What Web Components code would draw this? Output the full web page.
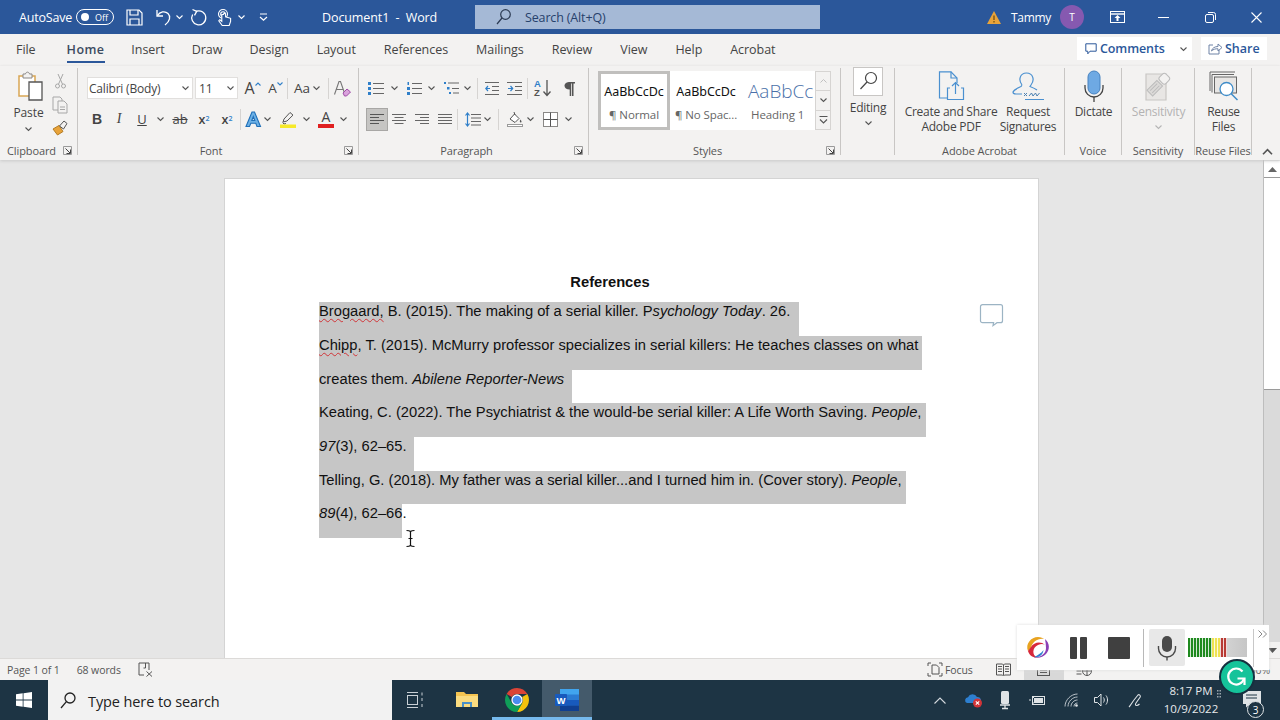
<!DOCTYPE html>
<html>
<head>
<meta charset="utf-8">
<title>Document1 - Word</title>
<style>
	html, body { margin: 0; height: 100%; overflow: hidden; background: #e6e6e6; }
</style>
</head>
<body>
<word-app>
	<word-titlebar></word-titlebar>
	<word-tabs>
		<tab-item>File</tab-item>
		<tab-item active style="margin-left:3px;letter-spacing:.4px">Home</tab-item>
		<tab-item style="margin-left:-1px">Insert</tab-item>
		<tab-item style="margin-left:-1px">Draw</tab-item>
		<tab-item style="margin-left:-1px">Design</tab-item>
		<tab-item>Layout</tab-item>
		<tab-item>References</tab-item>
		<tab-item>Mailings</tab-item>
		<tab-item>Review</tab-item>
		<tab-item>View</tab-item>
		<tab-item>Help</tab-item>
		<tab-item>Acrobat</tab-item>
	</word-tabs>
	<word-ribbon>
		<ribbon-group launcher style="width:78px" label="Clipboard">
			<clipboard-tools></clipboard-tools>
		</ribbon-group>
		<ribbon-group launcher style="width:281px" label="Font">
			<font-tools></font-tools>
		</ribbon-group>
		<ribbon-group launcher style="width:230px" label="Paragraph">
			<paragraph-tools></paragraph-tools>
		</ribbon-group>
		<ribbon-group launcher style="width:252px" label="Styles">
			<style-gallery>
				<style-card selected sample="AaBbCcDc">¶ Normal</style-card>
				<style-card sample="AaBbCcDc">¶ No Spac...</style-card>
				<style-card heading sample="AaBbCc">Heading 1</style-card>
			</style-gallery>
		</ribbon-group>
		<ribbon-group style="width:54px" label="">
			<big-btn icon="editing" text="Editing" chevron style="width:54px;margin-top:-4px"></big-btn>
		</ribbon-group>
		<ribbon-group style="width:170px" label="Adobe Acrobat">
			<big-btn icon="createpdf" text="Create and Share|Adobe PDF" style="width:112px"></big-btn>
			<big-btn icon="signature" text="Request|Signatures" style="width:58px;margin-left:-8px"></big-btn>
		</ribbon-group>
		<ribbon-group style="width:57px" label="Voice">
			<big-btn icon="dictate" text="Dictate" style="width:57px"></big-btn>
		</ribbon-group>
		<ribbon-group style="width:73px" label="Sensitivity">
			<big-btn icon="sensitivity" text="Sensitivity" chevron muted style="width:73px"></big-btn>
		</ribbon-group>
		<ribbon-group style="width:57px" label="Reuse Files">
			<big-btn icon="reuse" text="Reuse|Files" style="width:57px"></big-btn>
		</ribbon-group>
	</word-ribbon>
	<doc-view>
		<doc-title>References</doc-title>
		<ref-line w="480"><spell-err>Brogaard,</spell-err> B. (2015). The making of a serial killer. P<i>sychology Today</i>. 26.</ref-line>
		<ref-line w="603"><spell-err>Chipp</spell-err>, T. (2015). McMurry professor specializes in serial killers: He teaches classes on what</ref-line>
		<ref-line w="253">creates them. <i>Abilene Reporter-News</i></ref-line>
		<ref-line w="607">Keating, C. (2022). The Psychiatrist &amp; the would-be serial killer: A Life Worth Saving. <i>People</i>,</ref-line>
		<ref-line w="95"><i>97</i>(3), 62–65.</ref-line>
		<ref-line w="587">Telling, G. (2018). My father was a serial killer...and I turned him in. (Cover story). <i>People</i>,</ref-line>
		<ref-line w="83"><i>89</i>(4), 62–66.</ref-line>
	</doc-view>
	<status-bar></status-bar>
	<win-taskbar></win-taskbar>
	<rec-toolbar></rec-toolbar>
	<grammarly-badge></grammarly-badge>
	<text-cursor></text-cursor>
</word-app>

<script>
const B = '#2f7fc9';
const chev = (c) => `<path d="M.5 .5L3.5 3.5L6.5 .5" fill="none" stroke="${c}" stroke-width="1.1"/>`;

// name: [width, height, inner svg]
const ICONS = {
	chev: [7, 4, chev('#555')],
	chevw: [7, 4, chev('#fff')],
	chevg: [7, 4, chev('#b5b5b5')],
	save: [17, 17, `<g fill="none" stroke="#fff" stroke-width="1.2"><path d="M1 1h12l3 3v12H1z"/><path d="M4 1v5h8V1M4 16v-6h9v6"/></g>`],
	undo: [16, 17, `<g fill="none" stroke="#fff" stroke-width="1.3"><path d="M2 1v6h6"/><path d="M2.4 6.6C5 2.5 10 1.6 13 4.5c2.8 2.8 2.2 7.5-3 11.5"/></g>`],
	redo: [17, 17, `<g fill="none" stroke="#fff" stroke-width="1.3"><path d="M6.5 2.2A7 7 0 1 1 2.6 5.5"/><path d="M2.5 .5L6.7 2.3L4.5 6.4"/></g>`],
	touch: [15, 17, `<g fill="none" stroke="#fff" stroke-width="1.1"><circle cx="6" cy="5" r="4.5"/><circle cx="6" cy="5" r="2.3"/><path d="M4.8 5.5v6.8l-2-1.6-1 1 3.4 4.8h7l1.4-4v-3.2l-5-1.4V5.5a1 1 0 0 0-2.2 0z" fill="#2b579a"/></g>`],
	qat: [9, 8, `<path d="M1 1h7" stroke="#fff" fill="none"/><path d="M1 4L4.500 7.200L8 4" stroke="#fff" fill="none" stroke-width="1.2"/>`],
	mag: [15, 16, `<g fill="none" stroke="#2b3a52" stroke-width="1.2"><circle cx="9.500" cy="5.500" r="4.800"/><path d="M6 9L1 15"/></g>`],
	warn: [14, 13, `<path d="M7 0L14 13H0z" fill="#e8a33a"/><path d="M7 4.500v4.500M7 10v1.500" stroke="#6a4a10" stroke-width="1.2"/>`],
	display: [15, 12, `<g fill="none" stroke="#fff"><rect x=".5" y=".5" width="14" height="11"/><path d="M.5 3h14" stroke-width="1.400"/></g><path d="M7.500 4l3 3H8.500v3h-2V7H4.500z" fill="#fff"/>`],
	min: [11, 1, `<path d="M0 .5h11" stroke="#fff"/>`],
	restore: [11, 11, `<g fill="none" stroke="#fff"><rect x=".5" y="2.500" width="8" height="8" rx="1.500"/><path d="M3 .5h5.500a2 2 0 0 1 2 2V8"/></g>`],
	close: [11, 11, `<path d="M.5 .5l10 10M10.500 .5l-10 10" stroke="#fff" stroke-width="1.100"/>`],
	comment: [12, 12, `<path d="M.8 .8h10.400v7.400H5L2.800 10.800V8.200H.8z" fill="none" stroke="#2b579a"/>`],
	share: [15, 13, `<g fill="none" stroke="#6f83a6"><path d="M5 3H1v9h10V8"/><path d="M3.500 9C4 6 7 4.500 10 4.500V2l4 3.500L10 9V6.800C7.500 6.500 5 7.500 3.500 9z"/></g>`],
	launcher: [9, 9, `<g fill="none" stroke="#777"><path d="M.5 8.500V.5h8v8z" stroke="#9a9a9a"/><path d="M2.500 2.500l4.500 4.500M7.500 3.500v4h-4" stroke="#444"/></g>`],
	paste: [29, 31, `<path d="M4 5h16v20H4z" fill="#fff" stroke="#d9a654" stroke-width="1.500"/><path d="M8 5V3h2.500c.5-2.500 3.500-2.500 4 0H17v4H8z" fill="#f3f2f1" stroke="#8a8886"/><path d="M14 11h13v18H14z" fill="#fff" stroke="#555" stroke-width="1.300"/>`],
	cut: [11, 16, `<g fill="none" stroke="#a7a7a7"><circle cx="2.500" cy="13" r="2"/><circle cx="8.500" cy="13" r="2"/><path d="M3.500 11.200L8 1M7.500 11.200L3 1"/></g>`],
	copy: [16, 18, `<g fill="#f3f2f1" stroke="#a7a7a7"><path d="M1 1h7l2 2v11H1z"/><path d="M6 5h6l3 3v9H6z"/><path d="M8 11h5M8 13.500h5"/></g>`],
	painter: [16, 16, `<path d="M1 9l6-3.500 4 6L5.500 15z" fill="#e8a33a" stroke="#b57c22"/><path d="M7.500 6L12 1l3 2.500-3.500 5.500z" fill="#f3f2f1" stroke="#555"/>`],
	grow: [6, 4, `<path d="M.5 3.500L3 1l2.500 2.500" fill="none" stroke="${B}" stroke-width="1.100"/>`],
	shrink: [6, 4, `<path d="M.5 .5L3 3l2.500-2.500" fill="none" stroke="${B}" stroke-width="1.100"/>`],
	clearfmt: [17, 17, `<path d="M.5 14.500L5 1.500h1.500L11 14.500M2.500 9.500h6.500" fill="none" stroke="#777" stroke-width="1.100"/><path d="M9 13l4-4 3.500 3-4 4H10.500z" fill="#d9a3dc" stroke="#a04ca8"/>`],
	texteff: [16, 16, `<path d="M1 15.500L7 1h2.500l6 14.500h-3.500l-1.200-3.300H5.800L4.500 15.500zM6.800 9.500h3L8.300 5.500z" fill="#6cb1e6" stroke="#1f6fb8" stroke-width="1.100"/>`],
	marker: [16, 17, `<path d="M3 11l1-3 6-6.500 3 2.600L7 10z" fill="none" stroke="#555"/><path d="M2.500 11.500l1.500 1.500 2-.5" stroke="#555" fill="none"/><rect x="0" y="13.500" width="16" height="3.500" fill="#f6e929"/>`],
	bullets: [16, 15, `<g fill="${B}"><rect x="0" y="1" width="3" height="3"/><rect x="0" y="6" width="3" height="3"/><rect x="0" y="11" width="3" height="3"/></g><g stroke="#666"><path d="M5 2.500h11M5 7.500h11M5 12.500h11"/></g>`],
	numbers: [16, 15, `<g fill="${B}"><rect x="1.500" y="1" width="1.500" height="3"/><rect x="1" y="6" width="3" height="3"/><rect x="1" y="11" width="3" height="3"/></g><g stroke="#666"><path d="M6 2.500h10M6 7.500h10M6 12.500h10"/></g>`],
	multi: [16, 15, `<g fill="${B}"><rect x="1" y="1" width="2" height="2"/><rect x="4" y="6" width="2.500" height="2.500"/><rect x="6" y="11" width="2" height="2"/></g><g stroke="#666"><path d="M5 2h11M9 7.500h7M10 12h6"/></g>`],
	outdent: [14, 13, `<g stroke="#666"><path d="M0 .5h14M7 4.500h7M7 8.500h7M0 12.500h14"/></g><path d="M5 6.500H1M3 4L.8 6.500 3 9" stroke="${B}" fill="none" stroke-width="1.200"/>`],
	indent: [15, 13, `<g stroke="#666"><path d="M0 .5h15M8 4.500h7M8 8.500h7M0 12.500h15"/></g><path d="M1 6.500h4M3.500 4L5.700 6.500 3.500 9" stroke="${B}" fill="none" stroke-width="1.200"/>`],
	sort: [18, 18, `<text x="0" y="8" font-size="9.500" font-weight="600" fill="${B}" font-family="Liberation Sans">A</text><text x="0" y="17" font-size="9.500" font-weight="600" fill="#555" font-family="Liberation Sans">Z</text><path d="M13 1v15M9.500 12.500L13 16.500l3.500-4" fill="none" stroke="#555" stroke-width="1.300"/>`],
	pilcrow: [11, 15, `<path d="M6 1h5v1.500H9.500V15H8V2.500H7.200V15H5.700V8.500C2.500 8.500 .5 7 .5 4.700S2.800 1 6 1z" fill="#555"/>`],
	al: [14, 11, `<g stroke="#555"><path d="M0 .5h14M0 3.500h9M0 6.500h14M0 9.500h9"/></g>`],
	ac: [14, 11, `<g stroke="#666"><path d="M0 .5h14M2.500 3.500h9M0 6.500h14M2.500 9.500h9"/></g>`],
	ar: [14, 11, `<g stroke="#666"><path d="M0 .5h14M5 3.500h9M0 6.500h14M5 9.500h9"/></g>`],
	aj: [14, 11, `<g stroke="#666"><path d="M0 .5h14M0 3.500h14M0 6.500h14M0 9.500h14"/></g>`],
	spacing: [16, 15, `<g stroke="#666"><path d="M6 2.500h10M6 6h10M6 9.500h10M6 13h10"/></g><path d="M2.500 1v13M.5 3.500l2-2.500 2 2.500M.5 11.500l2 2.500 2-2.500" fill="none" stroke="${B}" stroke-width="1.200"/>`],
	shade: [16, 16, `<path d="M3 8l4.500-5 4.500 4.500-4 4z" fill="#fff" stroke="#555"/><path d="M13.500 8.500c1 1.500 1.500 2.500.5 3s-1.800-1-.5-3z" fill="#555"/><path d="M7 1l1 3" stroke="#555"/><rect x=".5" y="13.500" width="15" height="2" fill="#fff" stroke="#9a9a9a"/>`],
	borders: [15, 15, `<g fill="#fff" stroke="#8a8886"><rect x=".5" y=".5" width="14" height="14"/></g><path d="M7.500 .5v14M.5 7.500h14" stroke="#555"/>`],
	up: [7, 4, `<path d="M.5 3.500L3.500 .5l3 3" fill="none" stroke="#c0c0c0"/>`],
	more: [9, 8, `<path d="M.5 .5h8" stroke="#555"/><path d="M1 3.500L4.500 7 8 3.500" fill="none" stroke="#555" stroke-width="1.100"/>`],
	editing: [30, 30, `<rect x=".5" y=".5" width="29" height="28" fill="#fff" stroke="#c8c6c4"/><g fill="none" stroke="#444" stroke-width="1.200"><circle cx="18" cy="11" r="5.500"/><path d="M14 15l-6.500 7"/></g>`],
	createpdf: [27, 30, `<g fill="none" stroke="#4a90d0" stroke-width="1.200"><path d="M9 27H1.500V.8H13l6 6.200v5"/><path d="M13 .8v6.200h6"/><path d="M12 17h-2.500v11.500h16V17H23"/><path d="M17.500 23V11.500M14 15l3.500-3.500L21 15"/></g>`],
	signature: [32, 28, `<g fill="none" stroke="#4a90d0" stroke-width="1.200"><path d="M10 13C6 8 8 1 14.500 1S23 8 19 13l-1 1.500c2 .8 5 2 7 3.500M10 13l-1 1.500C6 16 2 17.500 1 20c0 1.500 1 2 3 2h6"/></g><path d="M12 21l3 3m0-3l-3 3" stroke="#4a7fb0"/><path d="M17 24l2.500-3 1.500 3 2.500-3 1.500 3 2.500-3" fill="none" stroke="#4a7fb0"/><path d="M13 27.500h19" stroke="#4a90d0"/>`],
	dictate: [20, 31, `<rect x="4" y="0" width="12" height="23" rx="6" fill="#6ea9e3" stroke="#4682c0"/><path d="M1 14v3a9 9 0 0 0 18 0v-3" fill="none" stroke="#444" stroke-width="1.300"/><path d="M10 26v5" stroke="#444" stroke-width="1.300"/>`],
	sensitivity: [28, 30, `<path d="M1 3h20v26H1z" fill="#e8e6e4" stroke="#c8c6c4" stroke-width="1.200"/><g transform="rotate(-45 14 13)" fill="#dcdad8" stroke="#bcbcbc"><rect x="1" y="9" width="14" height="8"/><path d="M3 11.500h10M3 14.500h10"/><rect x="17" y="8.500" width="9" height="9" rx="2.500" fill="#f3f2f1"/></g>`],
	reuse: [30, 30, `<g fill="none" stroke="#666"><path d="M1 1h25M1 1v19"/><path d="M3 3.500h22M3 3.500v18" /></g><rect x="5.500" y="6" width="22" height="16" fill="#e8e6e4" stroke="#666"/><circle cx="17.500" cy="18" r="6.500" fill="#fff" stroke="#3f8cc8" stroke-width="1.300"/><path d="M22 22.500l6.500 6.500" stroke="#3f8cc8" stroke-width="1.500"/>`],
	bubble: [23, 23, `<path d="M2.500 .7h18a2 2 0 0 1 2 2v14a2 2 0 0 1-2 2h-3.500l-4 3 .6-3H2.500a2 2 0 0 1-2-2v-14a2 2 0 0 1 2-2z" fill="#fff" stroke="#9cb4c4" stroke-width="1.200"/>`],
	proof: [15, 15, `<g fill="none" stroke="#555"><path d="M6 13H1V1h10v7"/><path d="M7.500 1v5h-2"/><path d="M8.500 9.500l5.500 5m0-5l-5.500 5"/></g>`],
	focus: [16, 15, `<g fill="none" stroke="#555"><path d="M1 4V1h3M12 1h3v3M15 11v3h-3M4 14H1v-3"/><path d="M5 3h4.500L12 5.500V12H5z"/></g>`],
	read: [15, 13, `<g fill="none" stroke="#555"><path d="M.5 1h6l1 1 1-1h6v11h-6l-1 1-1-1h-6z"/><path d="M7.500 2v10M2 3.500h4M2 6h4M2 8.500h4M9 3.500h4M9 6h4M9 8.500h4"/></g>`],
	print: [13, 12, `<g fill="none" stroke="#555"><rect x=".5" y=".5" width="12" height="11"/><path d="M3 3.500h7M3 6h7M3 8.500h7"/></g>`],
	web: [16, 12, `<g fill="none" stroke="#555"><path d="M.5 1h8M.5 4h6M.5 7h5M.5 10h5"/><circle cx="11" cy="7" r="4.500"/><path d="M6.500 7h9M11 2.500v9"/></g>`],
	win: [16, 16, `<path d="M0 2.300L6.700 1.300v6.300H0zM7.500 1.200L16 0v7.600H7.500zM0 8.400h6.700v6.400L0 13.800zM7.500 8.400H16V16l-8.500-1.200z" fill="#fff"/>`],
	magdark: [16, 17, `<g fill="none" stroke="#222" stroke-width="1.300"><circle cx="10" cy="6" r="5"/><path d="M6.400 9.600L1 16"/></g>`],
	taskview: [16, 16, `<g fill="none" stroke="#c9d0d6"><rect x=".5" y="3.500" width="10" height="9"/><path d="M0 .5h11M0 15.500h11M15 .5v3M15 6v3M15 12v3"/></g>`],
	folder: [22, 18, `<path d="M0 1h8l2 2h12v13H0z" fill="#f5c451"/><path d="M0 5h22v11H0z" fill="#fbdc80"/><path d="M6 16v-5h10v5h-2v-3H8v3z" fill="#4a90c8"/>`],
	chrome: [24, 24, `<path d="M12 0a12 12 0 0 1 10.390 6H12a6 6 0 0 0-5.200 3L1.610 6A12 12 0 0 1 12 0z" fill="#db4437"/><path d="M22.390 6A12 12 0 0 1 12 24l5.200-9A6 6 0 0 0 17.200 9z" fill="#f4c20d"/><path d="M1.610 6l5.200 9A6 6 0 0 0 12 18l5.200-3L12 24A12 12 0 0 1 1.610 6z" fill="#0f9d58"/><circle cx="12" cy="12" r="5" fill="#4a8cf0" stroke="#fff" stroke-width="1.300"/>`],
	word: [24, 22, `<rect x="5" y="0" width="19" height="22" rx="1.500" fill="#2b7cd3"/><rect x="5" y="0" width="19" height="5.500" fill="#41a5ee"/><rect x="5" y="11" width="19" height="5.500" fill="#185abd"/><rect x="5" y="16.500" width="19" height="5.500" fill="#103f91"/><rect x="0" y="5" width="12" height="12" rx="1" fill="#185abd"/><text x="6" y="14.500" font-size="9.500" font-weight="700" fill="#fff" text-anchor="middle" font-family="Liberation Sans">W</text>`],
	trayup: [12, 7, `<path d="M.5 6.500L6 1l5.500 5.500" fill="none" stroke="#d5dade" stroke-width="1.100"/>`],
	onedrive: [18, 16, `<path d="M2 11a3 3 0 0 1 1-5.800A5 5 0 0 1 12 5a3.500 3.500 0 0 1 3 6z" fill="#2d7fd0"/><circle cx="12.500" cy="11" r="4.500" fill="#d13438"/><path d="M10.800 9.300l3.400 3.400m0-3.400l-3.400 3.400" stroke="#fff" stroke-width="1.100"/>`],
	traymic: [10, 18, `<rect x="1" y="0" width="8" height="13" rx="1.500" fill="#dfe3e6"/><path d="M0 14h10M5 14v4M2 17.500h6" stroke="#dfe3e6" stroke-width="1.300"/>`],
	battery: [16, 11, `<path d="M3 2.500h2M3 8h2M0 5h2" stroke="#dfe3e6"/><rect x="3.500" y="1.500" width="12" height="8" fill="none" stroke="#dfe3e6"/><rect x="5" y="3" width="9" height="5" fill="#dfe3e6"/>`],
	wifi: [14, 14, `<g fill="none" stroke="#b9c1c8"><path d="M1 13.500C1 7 7 1 13.500 1"/><path d="M4 13.500C4 8.500 8.500 4 13.500 4"/><path d="M7 13.500C7 10 10 7 13.500 7"/><path d="M10 13.500c0-2 1.500-3.500 3.500-3.500"/></g><circle cx="12.500" cy="12.500" r="1.300" fill="#dfe3e6"/>`],
	volume: [15, 14, `<g fill="none" stroke="#dfe3e6"><path d="M.5 4.500h3L7 1v12L3.500 9.500h-3z"/><path d="M9.500 4.500c1 1.500 1 3.500 0 5M12 2.500c2 2.500 2 6.500 0 9"/></g>`],
	pen: [14, 15, `<path d="M1 14c2-2 2.500-4 5-7l4-5c1-1 3 .5 2.200 2L8 10c-1 1.500-.5 2.500.5 2.500s2-.5 3-1.500" fill="none" stroke="#dfe3e6" stroke-width="1.100"/>`],
	notify: [21, 21, `<path d="M0 1h18v13H7l-4 3.500V14H0z" fill="#dfe3e6"/><path d="M3 5h11M3 8h11" stroke="#1d3444"/>`],
	grip: [4, 7, `<path d="M0 0h1.500v1.500H0zM2.500 0H4v1.500H2.500zM0 3h1.500v1.500H0zM2.500 3H4v1.500H2.500zM0 6h1.500v1.500H0zM2.500 6H4v1.500H2.500z" fill="#9aa5ad"/>`],
	recmic: [20, 26, `<rect x="5" y="1" width="10" height="16" rx="5" fill="#4a4a4a"/><path d="M1.500 11v2.500a8.500 8.500 0 0 0 17 0V11" fill="none" stroke="#4a4a4a" stroke-width="1.400"/><path d="M10 22v3.500" stroke="#4a4a4a" stroke-width="1.400"/>`],
	reclogo: [25, 23, `<path d="M3 15C0 8 6 1 13 1c3 0 5 1 6 2-6-1-12 3-13 9z" fill="#e8a320"/><path d="M20 3c5 4 5 11 1 15-3 3-8 5-12 3 6 1 12-3 12-9 0-3-.5-6-1-9z" fill="#8b3fb5"/><path d="M3 15c1 4 5 7 9 6.500C7 19 7 12 13 9c3-1.500 5-1.500 7 0-4-4-11-3-14 2z" fill="#d7283b"/><path d="M9 21c5 1 9-2 9.500-7-2 3-6 5.500-9.500 7z" fill="#2f80d0"/>`],
	dbl: [9, 8, `<path d="M.5 .5L4 4 .5 7.500M5 .5L8.500 4 5 7.500" fill="none" stroke="#8a8a8a"/>`],
	gram: [22, 22, `<path d="M18 12.500A8 8 0 1 1 16.500 5.500" fill="none" stroke="#fff" stroke-width="2.200"/><path d="M11.500 12.500h7V19M18.500 12.500L12 12.500" fill="none" stroke="#fff" stroke-width="2.200"/>`],
	ibeam: [9, 17, `<path d="M.5 .5c2 0 3.200.3 4 1 .8-.7 2-1 4-1M4.500 1.500v14M.5 16.500c2 0 3.200-.3 4-1 .8.700 2 1 4 1M2.500 8.500h4" fill="none" stroke="#111" stroke-width="1.200"/>`],
	sbup: [9, 5, `<path d="M0 5L4.500 0 9 5z" fill="#666"/>`],
	sbdown: [9, 5, `<path d="M0 0L4.500 5 9 0z" fill="#555"/>`],
};

class WIc extends HTMLElement {
	connectedCallback() {
		if (this.shadowRoot) return;
		const [w, h, inner] = ICONS[this.getAttribute('name')];
		this.attachShadow({mode: 'open'}).innerHTML = `
			<style>:host { display: inline-flex; flex: none; line-height: 0; } svg { display: block; overflow: visible; }</style>
			<svg width="${w}" height="${h}" viewBox="0 0 ${w} ${h}">${inner}</svg>`;
		if (this.hasAttribute('ml')) this.style.marginLeft = this.getAttribute('ml') + 'px';
	}
}
customElements.define('w-ic', WIc);

class ToolBtn extends HTMLElement {
	constructor() {
		super();
		this.attachShadow({mode: 'open'}).innerHTML = `
			<style>
				:host { display: inline-flex; align-items: center; justify-content: center; height: 22px; flex: none; position: relative; color: #444; font-family: "Open Sans", sans-serif; font-size: 13px; }
				:host([rule]) { background: #d6d4d2; height: 21px; }
				:host([on]) { background: #c6c5c3; outline: 1px solid #a8a7a5; outline-offset: -1px; height: 23px; }
			</style>
			<slot></slot>`;
	}
	connectedCallback() {
		if (this.hasAttribute('w')) this.style.width = this.getAttribute('w') + 'px';
		if (this.hasAttribute('ml')) this.style.marginLeft = this.getAttribute('ml') + 'px';
	}
}
customElements.define('tool-btn', ToolBtn);

function component(tag, markup) {
	const tpl = document.createElement('template');
	tpl.innerHTML = markup;
	customElements.define(tag, class extends HTMLElement {
		constructor() {
			super();
			this.attachShadow({mode: 'open'}).append(tpl.content.cloneNode(true));
		}
	});
}

component('word-app', `
	<style>
		:host { display: flex; flex-direction: column; width: 1280px; height: 720px; position: relative; overflow: hidden; font-family: "Open Sans", "Noto Sans", sans-serif; }
	</style>
	<slot></slot>`);

component('word-titlebar', `
	<style>
		:host { display: flex; align-items: center; flex: none; height: 34px; background: #2b579a; color: #fff; font-size: 12.5px; }
		.auto { margin-left: 19px; letter-spacing: -.2px; }
		.toggle { margin-left: 4px; width: 38px; height: 16px; box-sizing: border-box; border: 1px solid #fff; border-radius: 8px; display: flex; align-items: center; font-size: 9px; }
		.toggle i { width: 8px; height: 8px; margin-left: 4px; border-radius: 50%; background: #fff; }
		.toggle span { margin-left: 6px; }
		.doc { margin-left: 54px; width: 153px; letter-spacing: -.1px; }
		.search { width: 345px; height: 24px; background: #a5b9d6; display: flex; align-items: center; color: #27416b; }
		.search span { margin-left: 14px; letter-spacing: -.15px; }
		.avatar { margin-left: 11px; width: 24px; height: 24px; border-radius: 50%; background: #8659b0; font-size: 10px; display: flex; align-items: center; justify-content: center; }
	</style>
	<span class="auto">AutoSave</span>
	<div class="toggle"><i></i><span>Off</span></div>
	<w-ic name="save" ml="12"></w-ic>
	<w-ic name="undo" ml="12"></w-ic>
	<w-ic name="chevw" ml="5"></w-ic>
	<w-ic name="redo" ml="7"></w-ic>
	<w-ic name="touch" ml="10"></w-ic>
	<w-ic name="chevw" ml="6"></w-ic>
	<w-ic name="qat" ml="14"></w-ic>
	<span class="doc">Document1&nbsp; -&nbsp; Word</span>
	<div class="search"><w-ic name="mag" ml="21"></w-ic><span>Search (Alt+Q)</span></div>
	<w-ic name="warn" ml="167"></w-ic>
	<span style="margin-left:10px;width:38px;font-size:12px;letter-spacing:-.3px">Tammy</span>
	<div class="avatar">T</div>
	<w-ic name="display" ml="26"></w-ic>
	<w-ic name="min" ml="33"></w-ic>
	<w-ic name="restore" ml="36"></w-ic>
	<w-ic name="close" ml="35"></w-ic>`);

component('word-tabs', `
	<style>
		:host { display: flex; align-items: center; flex: none; height: 32px; background: #f3f2f1; padding-left: 16px; position: relative; gap: 28px; font-size: 12.5px; color: #444; }
		.right { position: absolute; right: 13px; top: 3px; display: flex; gap: 9px; color: #2b579a; font-weight: 600; }
		.pill { height: 23px; background: #fff; display: flex; align-items: center; box-sizing: border-box; }
	</style>
	<slot></slot>
	<div class="right">
		<div class="pill" style="width:115px"><w-ic name="comment" ml="8"></w-ic><span style="margin-left:3px;letter-spacing:-.1px">Comments</span><w-ic name="chev" ml="15"></w-ic></div>
		<div class="pill" style="width:66px"><w-ic name="share" ml="7"></w-ic><span style="margin-left:2px">Share</span></div>
	</div>`);

component('tab-item', `
	<style>
		:host { display: block; position: relative; line-height: 32px; letter-spacing: -.05px; }
		:host([active]) { font-weight: 600; color: #3b4a60; }
		:host([active])::after { content: ""; position: absolute; left: 0; right: -1px; bottom: 3px; height: 2px; background: #2b579a; }
	</style>
	<slot></slot>`);

component('word-ribbon', `
	<style>
		:host { display: flex; flex: none; height: 94px; box-sizing: border-box; padding-top: 2px; background: #f3f2f1; box-shadow: 0 1px 3px #c8c8c8; position: relative; z-index: 2; font-size: 12px; color: #444; }
		.collapse { position: absolute; right: 9px; bottom: 6px; }
	</style>
	<slot></slot>
	<w-ic class="collapse" name="chev" style="transform:rotate(180deg) scale(1.500)"></w-ic>`);

class RibbonGroup extends HTMLElement {
	constructor() {
		super();
		this.attachShadow({mode: 'open'}).innerHTML = `
			<style>
				:host { display: flex; flex-direction: column; flex: none; height: 87px; box-sizing: border-box; border-right: 1px solid #c8c6c4; font-size: 11px; color: #555; }
				:host([launcher]) .foot { padding-right: 4px; }
				.body { display: flex; flex: 1; min-height: 0; }
				.foot { display: flex; align-items: center; height: 15px; margin-bottom: -3px; letter-spacing: -.1px; white-space: nowrap; }
				.foot span { flex: 1; text-align: center; }
				.foot w-ic { margin-right: 1px; }
			</style>
			<div class="body"><slot></slot></div>
			<div class="foot"><span id="l"></span></div>`;
	}
	connectedCallback() {
		const root = this.shadowRoot;
		root.getElementById('l').textContent = this.getAttribute('label');
		if (this.hasAttribute('launcher') && !root.querySelector('w-ic')) {
			const ic = document.createElement('w-ic');
			ic.setAttribute('name', 'launcher');
			root.querySelector('.foot').append(ic);
		}
	}
}
customElements.define('ribbon-group', RibbonGroup);

component('clipboard-tools', `
	<style>
		:host { display: flex; height: 70px; font-size: 12px; color: #444; }
		.paste { width: 57px; display: flex; flex-direction: column; align-items: center; padding-top: 3px; }
		.paste span { margin-top: 3px; line-height: 15px; letter-spacing: -.1px; }
		.paste w-ic:last-child { margin-top: 7px; }
		.side { display: flex; flex-direction: column; width: 20px; align-items: center; margin-left: -7px; }
		.side w-ic:nth-child(1) { margin-top: 5px; }
		.side w-ic:nth-child(2) { margin-top: 7px; }
		.side w-ic:nth-child(3) { margin-top: 6px; }
	</style>
	<div class="paste"><w-ic name="paste" style="margin-left:2px"></w-ic><span>Paste</span><w-ic name="chev"></w-ic></div>
	<div class="side"><w-ic name="cut"></w-ic><w-ic name="copy"></w-ic><w-ic name="painter"></w-ic></div>`);

component('font-tools', `
	<style>
		:host { display: flex; flex-direction: column; gap: 9px; padding: 9px 0 0 8px; }
		.row { display: flex; align-items: center; height: 22px; }
		.box { background: #fff; border: 1px solid #e1dfdd; box-sizing: border-box; height: 22px; display: flex; align-items: center; justify-content: space-between; padding: 0 3px 0 1px; font-size: 12px; color: #444; flex: none; letter-spacing: -.2px; }
		sub, sup { font-size: 7px; color: ${B}; line-height: 0; }
		.color { display: flex; flex-direction: column; align-items: center; font-size: 14px; line-height: 14px; color: #444; }
		.color i { display: block; width: 16px; height: 4px; background: #e02020; }
	</style>
	<div class="row">
		<div class="box" style="width:106px;margin-left:1px"><span>Calibri (Body)</span><w-ic name="chev"></w-ic></div>
		<div class="box" style="width:43px;margin-left:2px;padding-left:3px"><span>11</span><w-ic name="chev"></w-ic></div>
		<tool-btn w="19" ml="5" style="font-size:16px">A<w-ic name="grow" style="margin:-8px 0 0 0"></w-ic></tool-btn>
		<tool-btn w="17" ml="5" style="font-size:13.500px">A<w-ic name="shrink" style="margin:-8px 0 0 0"></w-ic></tool-btn>
		<tool-btn rule w="1" ml="3"></tool-btn>
		<tool-btn w="28" ml="5" style="font-size:13.500px">Aa<w-ic name="chev" ml="3"></w-ic></tool-btn>
		<tool-btn rule w="1" ml="7"></tool-btn>
		<tool-btn w="17" ml="5"><w-ic name="clearfmt"></w-ic></tool-btn>
	</div>
	<div class="row">
		<tool-btn w="22" style="font-weight:700;font-size:14px;font-family:'Liberation Sans'">B</tool-btn>
		<tool-btn w="22" style="font-style:italic;font-size:14px;font-family:'Liberation Serif'">I</tool-btn>
		<tool-btn w="24" style="text-decoration:underline;font-size:13px">U</tool-btn>
		<tool-btn w="12"><w-ic name="chev"></w-ic></tool-btn>
		<tool-btn w="28" style="text-decoration:line-through;font-size:13px">ab</tool-btn>
		<tool-btn w="20" style="font-weight:600;font-size:12.500px">x<sub>2</sub></tool-btn>
		<tool-btn w="26" style="font-weight:600;font-size:12.500px">x<sup>2</sup></tool-btn>
		<tool-btn rule w="1" style="margin-right:1px"></tool-btn>
		<tool-btn w="22"><w-ic name="texteff"></w-ic></tool-btn>
		<tool-btn w="6"><w-ic name="chev"></w-ic></tool-btn>
		<tool-btn w="20" ml="8"><w-ic name="marker"></w-ic></tool-btn>
		<tool-btn w="16"><w-ic name="chev"></w-ic></tool-btn>
		<tool-btn w="24"><div class="color">A<i></i></div></tool-btn>
		<tool-btn w="10"><w-ic name="chev"></w-ic></tool-btn>
	</div>`);

component('paragraph-tools', `
	<style>
		:host { display: flex; flex-direction: column; gap: 9px; padding-top: 9px; }
		.row { display: flex; align-items: center; height: 22px; }
	</style>
	<div class="row">
		<tool-btn w="16" ml="9"><w-ic name="bullets"></w-ic></tool-btn>
		<tool-btn w="20"><w-ic name="chev"></w-ic></tool-btn>
		<tool-btn w="20"><w-ic name="numbers"></w-ic></tool-btn>
		<tool-btn w="14"><w-ic name="chev"></w-ic></tool-btn>
		<tool-btn w="26"><w-ic name="multi"></w-ic></tool-btn>
		<tool-btn w="6"><w-ic name="chev"></w-ic></tool-btn>
		<tool-btn rule w="1" ml="7"></tool-btn>
		<tool-btn w="14" ml="7"><w-ic name="outdent"></w-ic></tool-btn>
		<tool-btn w="15" ml="8"><w-ic name="indent"></w-ic></tool-btn>
		<tool-btn rule w="1" ml="5"></tool-btn>
		<tool-btn w="18" ml="6"><w-ic name="sort"></w-ic></tool-btn>
		<tool-btn w="12" ml="11"><w-ic name="pilcrow"></w-ic></tool-btn>
	</div>
	<div class="row">
		<tool-btn on w="22" ml="7"><w-ic name="al"></w-ic></tool-btn>
		<tool-btn w="22"><w-ic name="ac"></w-ic></tool-btn>
		<tool-btn w="24"><w-ic name="ar"></w-ic></tool-btn>
		<tool-btn w="22"><w-ic name="aj"></w-ic></tool-btn>
		<tool-btn rule w="1" ml="1"></tool-btn>
		<tool-btn w="20" ml="5"><w-ic name="spacing"></w-ic></tool-btn>
		<tool-btn w="8"><w-ic name="chev"></w-ic></tool-btn>
		<tool-btn rule w="1" ml="7"></tool-btn>
		<tool-btn w="17" ml="7"><w-ic name="shade"></w-ic></tool-btn>
		<tool-btn w="14"><w-ic name="chev"></w-ic></tool-btn>
		<tool-btn w="16" ml="5"><w-ic name="borders"></w-ic></tool-btn>
		<tool-btn w="8" ml="6"><w-ic name="chev"></w-ic></tool-btn>
	</div>`);

component('style-gallery', `
	<style>
		:host { display: flex; height: 59px; margin: 3px 0 0 9px; }
		.cards { display: flex; width: 217px; height: 59px; background: #fff; overflow: hidden; }
		.scroll { display: flex; flex-direction: column; width: 16px; }
		.scroll div { flex: 1; display: flex; align-items: center; justify-content: center; border: 1px solid #d6d4d2; border-width: 1px 1px 0 1px; background: #f3f2f1; }
		.scroll div:last-child { border-bottom-width: 1px; }
	</style>
	<div class="cards"><slot></slot></div>
	<div class="scroll">
		<div><w-ic name="up"></w-ic></div>
		<div><w-ic name="chev"></w-ic></div>
		<div><w-ic name="more"></w-ic></div>
	</div>`);

class StyleCard extends HTMLElement {
	constructor() {
		super();
		this.attachShadow({mode: 'open'}).innerHTML = `
			<style>
				:host { display: flex; flex-direction: column; align-items: center; flex: none; width: 72px; height: 59px; box-sizing: border-box; padding-top: 10px; font-size: 11.500px; color: #666; overflow: hidden; }
				:host([selected]) { border: 3px solid #c0bfbd; padding-top: 7px; }
				:host([heading]) { padding-top: 5px; width: 73px; align-items: flex-start; padding-left: 6px; }
				.s { height: 22px; line-height: 22px; font-size: 12.500px; color: #111; white-space: nowrap; letter-spacing: -.05px; font-family: "Noto Sans", sans-serif; }
				:host([heading]) .s { font-size: 19px; color: #4a70a8; height: 30px; line-height: 30px; font-weight: 300; font-family: "Open Sans", sans-serif; }
				.l { margin-top: 4px; line-height: 16px; white-space: nowrap; letter-spacing: -.1px; }
				:host([heading]) .l { margin: 1px 0 0 3px; }
			</style>
			<div class="s" id="s"></div><div class="l"><slot></slot></div>`;
	}
	connectedCallback() {
		this.shadowRoot.getElementById('s').textContent = this.getAttribute('sample');
	}
}
customElements.define('style-card', StyleCard);

class BigBtn extends HTMLElement {
	constructor() {
		super();
		this.attachShadow({mode: 'open'}).innerHTML = `
			<style>
				:host { display: flex; flex-direction: column; align-items: center; flex: none; font-size: 12px; color: #444; text-align: center; letter-spacing: -.25px; }
				:host([muted]) { color: #b3b3b3; }
				.i { height: 36px; display: flex; align-items: center; justify-content: center; }
				.t { line-height: 15px; white-space: nowrap; }
				.c { margin-top: 6px; }
			</style>
			<div class="i" id="i"></div><div class="t" id="t"></div>`;
	}
	connectedCallback() {
		const root = this.shadowRoot;
		root.getElementById('i').innerHTML = `<w-ic name="${this.getAttribute('icon')}"></w-ic>`;
		root.getElementById('t').innerHTML = this.getAttribute('text').split('|').join('<br>');
		if (this.hasAttribute('chevron')) {
			const c = document.createElement('w-ic');
			c.className = 'c';
			c.setAttribute('name', this.hasAttribute('muted') ? 'chevg' : 'chev');
			root.append(c);
		}
	}
}
customElements.define('big-btn', BigBtn);

component('doc-view', `
	<style>
		:host { display: flex; flex: 1; min-height: 0; background: #e6e6e6; overflow: hidden; position: relative; }
		.stage { flex: 1; display: flex; justify-content: center; align-items: flex-start; padding-top: 18px; min-width: 0; }
		.page { width: 815px; height: 800px; box-sizing: border-box; flex: none; background: #fff; border: 1px solid #d4d4d4; padding: 93px 137px 0 94px; position: relative; font: 14.730px/18px "Liberation Sans", Arial, sans-serif; color: #111; }
		.note { position: absolute; left: 755px; top: 125px; }
		.bar { width: 17px; flex: none; display: flex; flex-direction: column; border-left: 1px solid #bdbdbd; box-sizing: border-box; }
		.btn { height: 16px; background: #fff; display: flex; align-items: center; justify-content: center; flex: none; }
		.thumb { height: 211px; background: #fff; border: solid #9a9a9a; border-width: 1px 0; flex: none; }
		.track { flex: 1; background: #dadada; }
		.low { background: #f3f2f1; }
	</style>
	<div class="stage">
		<div class="page"><slot></slot><w-ic class="note" name="bubble"></w-ic></div>
	</div>
	<div class="bar">
		<div class="btn" style="margin-top:1px"><w-ic name="sbup"></w-ic></div>
		<div class="thumb"></div>
		<div class="track"></div>
		<div class="btn low"><w-ic name="sbdown"></w-ic></div>
	</div>`);

component('doc-title', `
	<style>
		:host { display: block; text-align: center; font-weight: 700; line-height: 20px; margin-bottom: 10.300px; }
	</style>
	<slot></slot>`);

class RefLine extends HTMLElement {
	constructor() {
		super();
		this.attachShadow({mode: 'open'}).innerHTML = `
			<style>
				:host { display: block; height: 33.700px; box-sizing: border-box; background: #c6c6c6; white-space: nowrap; }
			</style>
			<slot></slot>`;
	}
	connectedCallback() {
		this.style.width = this.getAttribute('w') + 'px';
	}
}
customElements.define('ref-line', RefLine);

component('spell-err', `
	<style>
		:host { text-decoration: underline wavy #d13438 1px; text-underline-offset: 2px; }
	</style>
	<slot></slot>`);

component('status-bar', `
	<style>
		:host { display: flex; align-items: center; flex: none; height: 22px; background: #f3f2f1; border-top: 1px solid #dcdad8; box-sizing: border-box; font-size: 10.500px; color: #555; letter-spacing: -.1px; }
		.view { height: 21px; width: 40px; margin-left: 13px; background: #d8d8d8; display: flex; align-items: center; justify-content: center; }
	</style>
	<span style="margin-left:7px">Page 1 of 1</span>
	<span style="margin-left:17px">68 words</span>
	<w-ic name="proof" ml="17"></w-ic>
	<w-ic name="focus" style="margin-left:auto"></w-ic>
	<span style="margin-left:2px;margin-right:23px">Focus</span>
	<w-ic name="read"></w-ic>
	<div class="view"><w-ic name="print"></w-ic></div>
	<w-ic name="web" ml="12"></w-ic>
	<span style="margin-left:152px;margin-right:10px">100%</span>`);

component('win-taskbar', `
	<style>
		:host { display: flex; align-items: stretch; flex: none; height: 40px; background: #1d3444; color: #fff; font-size: 12.500px; }
		.slot { display: flex; align-items: center; justify-content: center; flex: none; position: relative; box-sizing: border-box; }
		.open::after { content: ""; position: absolute; left: 0; right: 0; bottom: 0; height: 3px; background: #76b9ed; }
		.search { width: 344px; background: #f2f2f2; color: #222; display: flex; align-items: center; font-size: 14.500px; letter-spacing: -.1px; }
		.search span { margin: 2px 0 0 12px; }
		.clock { width: 70px; flex-direction: column; line-height: 18px; font-size: 11.500px; color: #e8eaec; }
		.grip { position: absolute; right: 5px; top: 10px; }
		.badge { position: absolute; left: 21px; top: 21px; width: 15px; height: 15px; border-radius: 50%; background: #1d3444; border: 1px solid #dfe3e6; font-size: 10px; display: flex; align-items: center; justify-content: center; }
	</style>
	<div class="slot" style="width:48px"><w-ic name="win"></w-ic></div>
	<div class="search"><w-ic name="magdark" ml="12"></w-ic><span>Type here to search</span></div>
	<div class="slot" style="width:46px"><w-ic name="taskview"></w-ic></div>
	<div class="slot" style="width:4px"></div>
	<div class="slot" style="width:50px"><w-ic name="folder"></w-ic></div>
	<div class="slot open" style="width:50px"><w-ic name="chrome"></w-ic></div>
	<div class="slot open" style="width:50px;background:#445a6b"><w-ic name="word"></w-ic></div>
	<div style="flex:1"></div>
	<div class="slot" style="width:34px"><w-ic name="trayup"></w-ic></div>
	<div class="slot" style="width:33px"><w-ic name="onedrive"></w-ic></div>
	<div class="slot" style="width:30px"><w-ic name="traymic"></w-ic></div>
	<div class="slot" style="width:34px"><w-ic name="battery"></w-ic></div>
	<div class="slot" style="width:34px"><w-ic name="wifi"></w-ic></div>
	<div class="slot" style="width:26px"><w-ic name="volume"></w-ic></div>
	<div class="slot" style="width:42px"><w-ic name="pen"></w-ic></div>
	<div class="slot clock"><span>8:17 PM</span><span>10/9/2022</span><w-ic class="grip" name="grip"></w-ic></div>
	<div class="slot" style="width:54px"><w-ic name="notify"></w-ic><div class="badge">3</div></div>`);

component('rec-toolbar', `
	<style>
		:host { position: absolute; left: 1017px; top: 625px; width: 252px; height: 45px; background: #fff; display: flex; align-items: center; box-shadow: 0 0 3px #ddd; z-index: 3; }
		.pause { display: flex; gap: 3px; margin-left: 20px; }
		.pause i { display: block; width: 7px; height: 22px; background: #404040; border-radius: 1px; }
		.stop { width: 22px; height: 22px; margin-left: 21px; background: #404040; border-radius: 1px; }
		.rule { width: 1px; height: 38px; margin-left: 13px; background: #b8b8b8; }
		.mic { width: 36px; height: 37px; margin-left: 5px; background: #e8e8e8; border-radius: 2px; display: flex; align-items: center; justify-content: center; }
		.meter { width: 59px; height: 19px; margin-left: 3px; background: repeating-linear-gradient(90deg, transparent 0 2px, rgba(255,255,255,.8) 2px 3px) 0 0 / 39px 100% no-repeat, linear-gradient(90deg, #1f8a1f 0 24px, #efe352 24px 32px, #b83a34 32px 39px, #d2d2d2 39px, #c6c6c6); }
		.rule2 { width: 1px; height: 38px; margin-left: 6px; background: #c8c8c8; }
		.dbl { align-self: flex-start; margin: 5px 0 0 4px; }
	</style>
	<w-ic name="reclogo" ml="8"></w-ic>
	<div class="pause"><i></i><i></i></div>
	<div class="stop"></div>
	<div class="rule"></div>
	<div class="mic"><w-ic name="recmic"></w-ic></div>
	<div class="meter"></div>
	<div class="rule2"></div>
	<w-ic class="dbl" name="dbl"></w-ic>`);

component('grammarly-badge', `
	<style>
		:host { position: absolute; left: 1219px; top: 659px; width: 36px; height: 36px; box-sizing: border-box; border-radius: 50%; background: #15c39a; border: 2px solid #16303f; display: flex; align-items: center; justify-content: center; z-index: 4; }
	</style>
	<w-ic name="gram"></w-ic>`);

component('text-cursor', `
	<style>
		:host { position: absolute; left: 406px; top: 530px; z-index: 4; line-height: 0; }
	</style>
	<w-ic name="ibeam"></w-ic>`);
</script>
</body>
</html>
